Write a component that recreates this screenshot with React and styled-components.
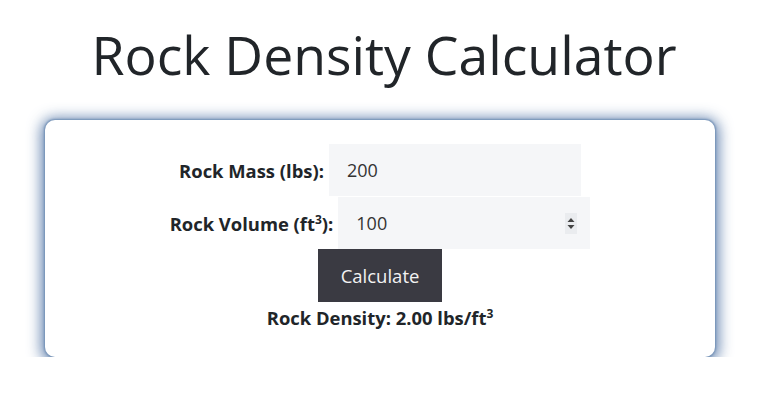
import React, { useState } from 'react';
import styled, { createGlobalStyle } from 'styled-components';

const GlobalStyle = createGlobalStyle`
    body {
        margin: 0;
        background: #fff;
        font-family: "Open Sans", "Liberation Sans", sans-serif;
        color: #212529;
    }
`;

const Page = styled.div`
    width: 768px;
    padding-top: 17px;
`;

const Title = styled.h1`
    margin: 0 0 27px;
    text-align: center;
    font-weight: 400;
    font-size: 53.5px;
    line-height: 76px;
    color: #212529;
`;

const Card = styled.div`
    margin: 0 53px 0 45px;
    padding: 24px 0 27px;
    background: #fff;
    border-radius: 10px;
    box-shadow: 0 0 2px 1px #7391b6, 0 2px 14px 4px rgba(80, 115, 165, 0.85);
    display: flex;
    flex-direction: column;
    align-items: center;
`;

const Row = styled.div`
    display: flex;
    align-items: center;
    gap: 5px;
    margin-bottom: ${({ $gap }) => $gap || 0}px;
`;

const Label = styled.label`
    font-weight: 700;
    font-size: 18.4px;
    color: #212529;
    sup {
        font-size: 12px;
        line-height: 0;
    }
`;

const Field = styled.div`
    width: 252px;
    height: 52px;
    background: #f5f6f8;
    display: flex;
    align-items: center;
    padding: 0 13px 0 18px;
    box-sizing: border-box;
`;

const Input = styled.input`
    flex: 1;
    min-width: 0;
    border: none;
    outline: none;
    background: transparent;
    font-family: inherit;
    font-size: 18px;
    color: #333;
    padding: 0;
`;

const Spinner = styled.div`
    width: 12px;
    height: 21px;
    background: #eaecef;
    display: flex;
    align-items: center;
    justify-content: center;
`;

const Button = styled.button`
    width: 124px;
    height: 53px;
    border: none;
    background: #3a3a42;
    color: #f2f2f2;
    font-family: inherit;
    font-size: 18.5px;
    cursor: pointer;
`;

const Result = styled.div`
    margin-top: 3px;
    font-weight: 700;
    font-size: 18.4px;
    color: #212529;
    sup {
        font-size: 12px;
        line-height: 0;
    }
`;

export default function App() {
    const [mass, setMass] = useState('200');
    const [volume, setVolume] = useState('100');
    const [density, setDensity] = useState('2.00');

    const calculate = () => {
        const m = parseFloat(mass);
        const v = parseFloat(volume);
        if (v) setDensity((m / v).toFixed(2));
    };

    return (
        <Page>
            <GlobalStyle />
            <Title>Rock Density Calculator</Title>
            <Card>
                <Row $gap={1}>
                    <Label>Rock Mass (lbs):</Label>
                    <Field>
                        <Input value={mass} onChange={e => setMass(e.target.value)} />
                    </Field>
                </Row>
                <Row>
                    <Label>Rock Volume (ft<sup>3</sup>):</Label>
                    <Field>
                        <Input value={volume} onChange={e => setVolume(e.target.value)} />
                        <Spinner>
                            <svg width="8" height="17" viewBox="0 0 8 17">
                                <path d="M4 3 L7.5 7 L0.5 7 Z" fill="#444" />
                                <path d="M4 14 L7.5 10 L0.5 10 Z" fill="#444" />
                            </svg>
                        </Spinner>
                    </Field>
                </Row>
                <Button onClick={calculate}>Calculate</Button>
                <Result>Rock Density: {density} lbs/ft<sup>3</sup></Result>
            </Card>
        </Page>
    );
}
